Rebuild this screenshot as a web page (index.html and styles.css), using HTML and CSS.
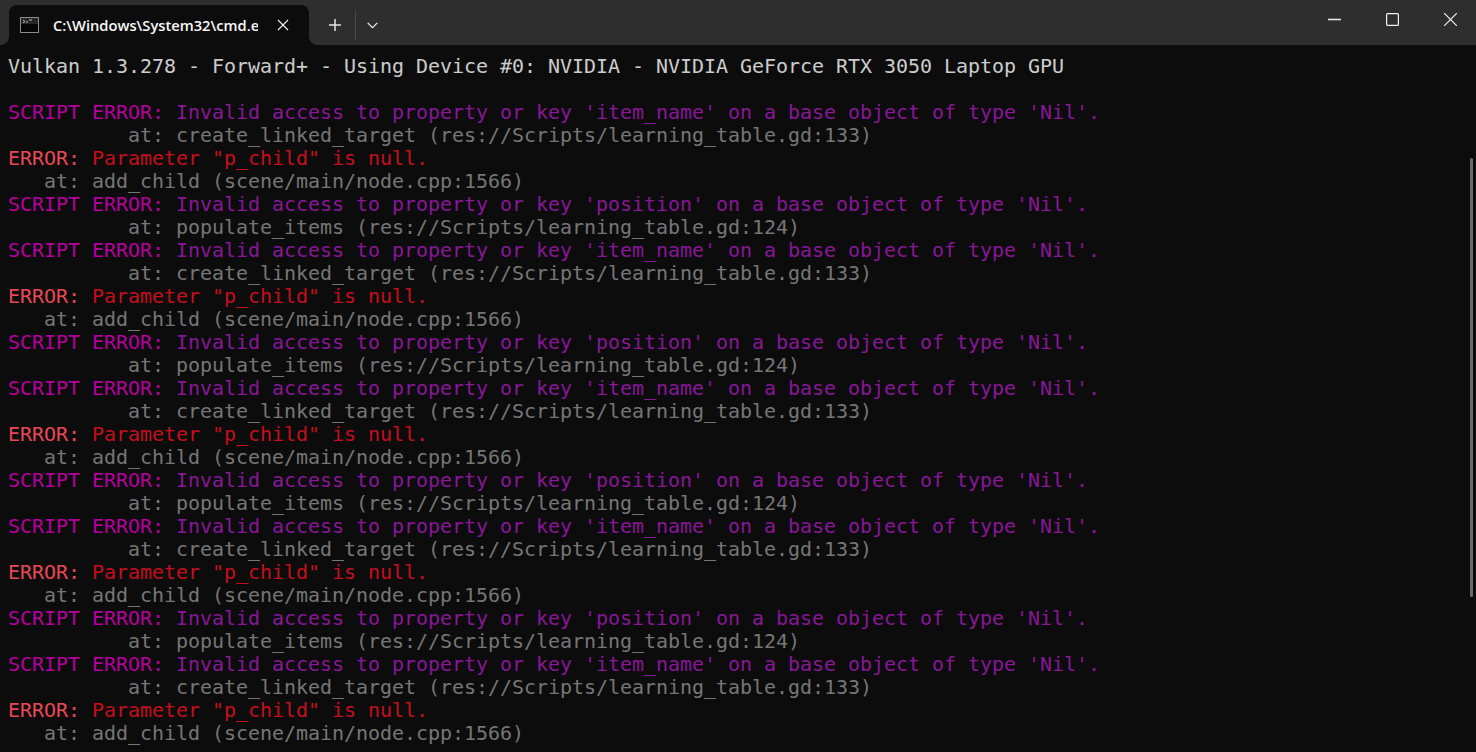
FILE: index.html
```html
<!DOCTYPE html>
<html lang="en">
<head>
<meta charset="utf-8">
<title>cmd</title>
<link rel="stylesheet" href="styles.css">
</head>
<body>
<div class="window">
  <header class="titlebar">
    <div class="tab">
      <svg class="tab-icon" width="19" height="16" viewBox="0 0 19 16"><rect x="0.5" y="0.5" width="18" height="15" fill="#050505" stroke="#8c8c8c"/><rect x="1" y="1" width="17" height="6" fill="#262626"/><path d="M3 3l2 1.5L3 6M6 5h2M9 3h3" stroke="#bdbdbd" stroke-width="1" fill="none"/></svg>
      <span class="tab-title">C:\Windows\System32\cmd.exe</span>
      <svg class="tab-close" width="12" height="12" viewBox="0 0 12 12"><path d="M1 1l10 10M11 1L1 11" stroke="#f2f2f2" stroke-width="1.1" fill="none"/></svg>
    </div>
    <button class="tab-btn new-tab"><svg width="12" height="12" viewBox="0 0 12 12"><path d="M6 0v12M0 6h12" stroke="#e6e6e6" stroke-width="1.5" fill="none"/></svg></button>
    <span class="tab-sep"></span>
    <button class="tab-btn tab-menu"><svg width="11" height="7" viewBox="0 0 11 7"><path d="M0.7 0.9L5.5 5.7 10.3 0.9" stroke="#f2f2f2" stroke-width="1.2" fill="none"/></svg></button>
    <div class="caption">
      <span class="cap-btn"><svg width="13" height="13" viewBox="0 0 13 13"><path d="M0 6.5h13" stroke="#e4e4e4" stroke-width="1.6" fill="none"/></svg></span>
      <span class="cap-btn"><svg width="13" height="13" viewBox="0 0 13 13"><rect x="0.6" y="0.6" width="11.8" height="11.8" rx="1" stroke="#f2f2f2" stroke-width="1.2" fill="none"/></svg></span>
      <span class="cap-btn"><svg width="13" height="13" viewBox="0 0 13 13"><path d="M0 0l13 13M13 0L0 13" stroke="#f2f2f2" stroke-width="1.2" fill="none"/></svg></span>
    </div>
  </header>
  <main class="terminal">
    <div class="line plain">Vulkan 1.3.278 - Forward+ - Using Device #0: NVIDIA - NVIDIA GeForce RTX 3050 Laptop GPU</div>
    <div class="line">&nbsp;</div>
    <div class="line"><span class="se-label">SCRIPT ERROR:</span> <span class="se-msg">Invalid access to property or key 'item_name' on a base object of type 'Nil'.</span></div>
    <div class="line trace">          at: create_linked_target (res://Scripts/learning_table.gd:133)</div>
    <div class="line"><span class="e-label">ERROR:</span> <span class="e-msg">Parameter "p_child" is null.</span></div>
    <div class="line trace">   at: add_child (scene/main/node.cpp:1566)</div>
    <div class="line"><span class="se-label">SCRIPT ERROR:</span> <span class="se-msg">Invalid access to property or key 'position' on a base object of type 'Nil'.</span></div>
    <div class="line trace">          at: populate_items (res://Scripts/learning_table.gd:124)</div>
    <div class="line"><span class="se-label">SCRIPT ERROR:</span> <span class="se-msg">Invalid access to property or key 'item_name' on a base object of type 'Nil'.</span></div>
    <div class="line trace">          at: create_linked_target (res://Scripts/learning_table.gd:133)</div>
    <div class="line"><span class="e-label">ERROR:</span> <span class="e-msg">Parameter "p_child" is null.</span></div>
    <div class="line trace">   at: add_child (scene/main/node.cpp:1566)</div>
    <div class="line"><span class="se-label">SCRIPT ERROR:</span> <span class="se-msg">Invalid access to property or key 'position' on a base object of type 'Nil'.</span></div>
    <div class="line trace">          at: populate_items (res://Scripts/learning_table.gd:124)</div>
    <div class="line"><span class="se-label">SCRIPT ERROR:</span> <span class="se-msg">Invalid access to property or key 'item_name' on a base object of type 'Nil'.</span></div>
    <div class="line trace">          at: create_linked_target (res://Scripts/learning_table.gd:133)</div>
    <div class="line"><span class="e-label">ERROR:</span> <span class="e-msg">Parameter "p_child" is null.</span></div>
    <div class="line trace">   at: add_child (scene/main/node.cpp:1566)</div>
    <div class="line"><span class="se-label">SCRIPT ERROR:</span> <span class="se-msg">Invalid access to property or key 'position' on a base object of type 'Nil'.</span></div>
    <div class="line trace">          at: populate_items (res://Scripts/learning_table.gd:124)</div>
    <div class="line"><span class="se-label">SCRIPT ERROR:</span> <span class="se-msg">Invalid access to property or key 'item_name' on a base object of type 'Nil'.</span></div>
    <div class="line trace">          at: create_linked_target (res://Scripts/learning_table.gd:133)</div>
    <div class="line"><span class="e-label">ERROR:</span> <span class="e-msg">Parameter "p_child" is null.</span></div>
    <div class="line trace">   at: add_child (scene/main/node.cpp:1566)</div>
    <div class="line"><span class="se-label">SCRIPT ERROR:</span> <span class="se-msg">Invalid access to property or key 'position' on a base object of type 'Nil'.</span></div>
    <div class="line trace">          at: populate_items (res://Scripts/learning_table.gd:124)</div>
    <div class="line"><span class="se-label">SCRIPT ERROR:</span> <span class="se-msg">Invalid access to property or key 'item_name' on a base object of type 'Nil'.</span></div>
    <div class="line trace">          at: create_linked_target (res://Scripts/learning_table.gd:133)</div>
    <div class="line"><span class="e-label">ERROR:</span> <span class="e-msg">Parameter "p_child" is null.</span></div>
    <div class="line trace">   at: add_child (scene/main/node.cpp:1566)</div>
    <div class="scrollbar"></div>
  </main>
</div>
</body>
</html>
```
FILE: styles.css
```css
* { box-sizing: border-box; }
html, body { margin: 0; height: 100%; overflow: hidden; background: #0c0c0c; }
.window { display: flex; flex-direction: column; height: 752px; width: 1476px; }
.titlebar {
  display: flex; align-items: center; height: 45px; flex: none;
  background: #2e2e2e; padding: 5px 0 0 9px;
}
.tab {
  position: relative; display: flex; align-items: center; width: 300px; height: 40px;
  background: #0c0c0c; border-radius: 8px 8px 0 0; padding: 0 0 0 11px;
}
.tab::before, .tab::after {
  content: ""; position: absolute; bottom: 0; width: 8px; height: 8px;
}
.tab::before { left: -8px; background: radial-gradient(circle at 0 0, transparent 7.5px, #0c0c0c 8px); }
.tab::after { right: -8px; background: radial-gradient(circle at 100% 0, transparent 7.5px, #0c0c0c 8px); }
.tab-icon { flex: none; margin-right: 14px; }
.tab-title {
  width: 205px; overflow: hidden; white-space: nowrap; flex: none;
  font: 600 14.7px/20px "Open Sans", sans-serif; color: #f8f8f8;
}
.tab-close { flex: none; margin-left: 19px; }
.tab-btn {
  display: flex; align-items: center; justify-content: center; border: 0; padding: 0;
  background: none; height: 32px;
}
.new-tab { width: 34px; margin-left: 9px; }
.tab-sep { width: 1px; height: 30px; background: #454545; margin-left: 3px; }
.tab-menu { width: 33px; }
.caption { margin-left: auto; align-self: flex-start; margin-top: -5px; display: flex; gap: 7px; height: 38px; }
.cap-btn { width: 51px; height: 38px; display: flex; align-items: center; justify-content: center; }
.terminal {
  position: relative; flex: 1; background: #0c0c0c; padding: 10px 8px 0;
  font: 20px/23px "DejaVu Sans Mono", monospace; letter-spacing: -0.04px;
}
.line { height: 23px; white-space: pre; }
.plain { color: #cccccc; }
.trace { color: #767676; }
.se-label { color: #b4009e; }
.se-msg { color: #881798; }
.e-label { color: #e74856; }
.e-msg { color: #c50f1f; }
.scrollbar { position: absolute; right: 3px; top: 113px; width: 3px; height: 439px; background: #6a6a6a; border-radius: 1.5px; }
```
